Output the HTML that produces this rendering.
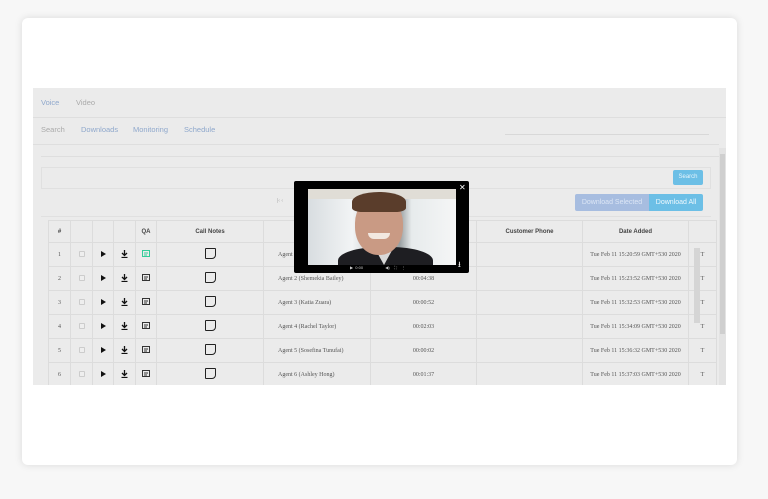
<!DOCTYPE html>
<html><head><style>
*{margin:0;padding:0;box-sizing:border-box}
body{width:768px;height:499px;background:#f7f7f7;font-family:"Liberation Sans",sans-serif;position:relative;overflow:hidden}
.a{position:absolute}
.card{left:22px;top:18px;width:715px;height:447px;background:#fff;border-radius:6px;box-shadow:0 0 8px rgba(0,0,0,.12)}
.grey{left:33px;top:88px;width:693px;height:297px;background:#ebebeb;overflow:hidden}
.t{font-size:7.5px;color:#8fa8cc}
.line{background:#dedede;height:1px}
table{border-collapse:collapse;font-size:6px;color:#555}
td,th{border:1px solid #dcdcdc;text-align:center;height:24px;padding:0}
th{font-weight:bold;color:#444;height:22px}
td.l{text-align:left;padding-left:14px;font-family:"Liberation Serif",serif}
td.s{font-family:"Liberation Serif",serif}
.cb{display:inline-block;width:6px;height:6px;border:1px solid #ccc;border-radius:1px;background:#eee}
.note{display:inline-block;width:11px;height:11px;border:1.5px solid #222;border-radius:1px 1px 4px 1px}
.pl{display:inline-block;width:0;height:0;border-left:5px solid #111;border-top:3.5px solid transparent;border-bottom:3.5px solid transparent}
</style></head><body>
<div class="a card"></div>
<div class="a grey">
  <div class="a t" style="left:8px;top:10px">Voice</div>
  <div class="a t" style="left:43px;top:10px;color:#aaa">Video</div>
  <div class="a line" style="left:0;top:29px;width:693px"></div>
  <div class="a t" style="left:8px;top:37px;color:#aaa">Search</div>
  <div class="a t" style="left:48px;top:37px">Downloads</div>
  <div class="a t" style="left:100px;top:37px">Monitoring</div>
  <div class="a t" style="left:151px;top:37px">Schedule</div>
  <div class="a line" style="left:472px;top:46px;width:204px;background:#d8d8d8"></div>
  <div class="a line" style="left:0;top:56px;width:686px"></div>
  <div class="a line" style="left:8px;top:68px;width:678px"></div>
  <div class="a" style="left:8px;top:79px;width:670px;height:22px;border:1px solid #e0e0e0"></div>
  <div class="a" style="left:640px;top:82px;width:30px;height:15px;background:#6cbfe6;border-radius:2px;color:#e6f4fb;font-size:6px;text-align:center;line-height:15px">Search</div>
  <div class="a" style="left:8px;top:101px;width:670px;height:28px;border-bottom:1px solid #e0e0e0"></div>
  <div class="a" style="left:244px;top:110px;font-size:5px;color:#aaa">|‹ ‹</div>
  <div class="a" style="left:542px;top:106px;width:74px;height:17px;background:#a7bde0;border-radius:2px 0 0 2px;color:#dce6f5;font-size:7px;text-align:center;line-height:17px">Download Selected</div>
  <div class="a" style="left:616px;top:106px;width:54px;height:17px;background:#6cbfe6;border-radius:0 2px 2px 0;color:#eef8fd;font-size:7px;text-align:center;line-height:17px">Download All</div>
  <table class="a" style="left:15px;top:132px;width:669px">
    <tr><th style="width:22px">#</th><th style="width:22px"></th><th style="width:21px"></th><th style="width:22px"></th><th style="width:21px">QA</th><th style="width:107px">Call Notes</th><th style="width:107px"></th><th style="width:106px"></th><th style="width:106px">Customer Phone</th><th style="width:106px">Date Added</th><th></th></tr>
    <tr><td class="s">1</td><td><span class="cb"></span></td><td><span class="pl"></span></td><td><svg width="7" height="8"><path d="M3.5 0v5M1 3l2.5 2.5L6 3M0.5 7.5h6" stroke="#111" stroke-width="1.3" fill="none"/></svg></td><td><svg width="8" height="8"><rect x=".5" y=".5" width="7" height="6" fill="none" stroke="#3c9"/><path d="M2 3h4M2 5h3" stroke="#3c9"/></svg></td><td><span class="note"></span></td><td class="l">Agent 1</td><td class="s"></td><td></td><td class="s">Tue Feb 11 15:20:59 GMT+530 2020</td><td class="s">T</td></tr>
    <tr><td class="s">2</td><td><span class="cb"></span></td><td><span class="pl"></span></td><td><svg width="7" height="8"><path d="M3.5 0v5M1 3l2.5 2.5L6 3M0.5 7.5h6" stroke="#111" stroke-width="1.3" fill="none"/></svg></td><td><svg width="8" height="8"><rect x=".5" y=".5" width="7" height="6" fill="none" stroke="#333"/><path d="M2 3h4M2 5h3" stroke="#333"/></svg></td><td><span class="note"></span></td><td class="l">Agent 2 (Shemekia Bailey)</td><td class="s">00:04:38</td><td></td><td class="s">Tue Feb 11 15:23:52 GMT+530 2020</td><td class="s">T</td></tr>
    <tr><td class="s">3</td><td><span class="cb"></span></td><td><span class="pl"></span></td><td><svg width="7" height="8"><path d="M3.5 0v5M1 3l2.5 2.5L6 3M0.5 7.5h6" stroke="#111" stroke-width="1.3" fill="none"/></svg></td><td><svg width="8" height="8"><rect x=".5" y=".5" width="7" height="6" fill="none" stroke="#333"/><path d="M2 3h4M2 5h3" stroke="#333"/></svg></td><td><span class="note"></span></td><td class="l">Agent 3 (Katia Zuara)</td><td class="s">00:00:52</td><td></td><td class="s">Tue Feb 11 15:32:53 GMT+530 2020</td><td class="s">T</td></tr>
    <tr><td class="s">4</td><td><span class="cb"></span></td><td><span class="pl"></span></td><td><svg width="7" height="8"><path d="M3.5 0v5M1 3l2.5 2.5L6 3M0.5 7.5h6" stroke="#111" stroke-width="1.3" fill="none"/></svg></td><td><svg width="8" height="8"><rect x=".5" y=".5" width="7" height="6" fill="none" stroke="#333"/><path d="M2 3h4M2 5h3" stroke="#333"/></svg></td><td><span class="note"></span></td><td class="l">Agent 4 (Rachel Taylor)</td><td class="s">00:02:03</td><td></td><td class="s">Tue Feb 11 15:34:09 GMT+530 2020</td><td class="s">T</td></tr>
    <tr><td class="s">5</td><td><span class="cb"></span></td><td><span class="pl"></span></td><td><svg width="7" height="8"><path d="M3.5 0v5M1 3l2.5 2.5L6 3M0.5 7.5h6" stroke="#111" stroke-width="1.3" fill="none"/></svg></td><td><svg width="8" height="8"><rect x=".5" y=".5" width="7" height="6" fill="none" stroke="#333"/><path d="M2 3h4M2 5h3" stroke="#333"/></svg></td><td><span class="note"></span></td><td class="l">Agent 5 (Sosefina Tunufai)</td><td class="s">00:00:02</td><td></td><td class="s">Tue Feb 11 15:36:32 GMT+530 2020</td><td class="s">T</td></tr>
    <tr><td class="s">6</td><td><span class="cb"></span></td><td><span class="pl"></span></td><td><svg width="7" height="8"><path d="M3.5 0v5M1 3l2.5 2.5L6 3M0.5 7.5h6" stroke="#111" stroke-width="1.3" fill="none"/></svg></td><td><svg width="8" height="8"><rect x=".5" y=".5" width="7" height="6" fill="none" stroke="#333"/><path d="M2 3h4M2 5h3" stroke="#333"/></svg></td><td><span class="note"></span></td><td class="l">Agent 6 (Ashley Hong)</td><td class="s">00:01:37</td><td></td><td class="s">Tue Feb 11 15:37:03 GMT+530 2020</td><td class="s">T</td></tr>
  </table>
  <div class="a" style="left:686px;top:60px;width:7px;height:237px;background:#e3e3e3"></div>
  <div class="a" style="left:687px;top:66px;width:5px;height:180px;background:#cfcfcf"></div>
  <div class="a" style="left:661px;top:160px;width:6px;height:75px;background:#d5d5d5"></div>
</div>
<div class="a" style="left:294px;top:181px;width:175px;height:92px;background:#000;border-radius:2px">
  <div class="a" style="left:14px;top:8px;width:148px;height:76px;overflow:hidden;background:linear-gradient(90deg,#d8dde0 0,#f2f4f5 30%,#9aa0a2 62%,#e7ebec 70%,#f5f6f6 100%)">
    <div class="a" style="left:0;top:0;width:148px;height:10px;background:#e0ddd6"></div>
    <div class="a" style="left:30px;top:58px;width:95px;height:30px;background:#1e1e22;border-radius:45% 45% 0 0"></div>
    <div class="a" style="left:65px;top:56px;width:22px;height:20px;background:#d9d9d9;clip-path:polygon(0 0,100% 0,50% 100%)"></div>
    <div class="a" style="left:47px;top:8px;width:48px;height:58px;background:#c99a84;border-radius:45% 45% 48% 48%"></div>
    <div class="a" style="left:44px;top:3px;width:54px;height:20px;background:#5a3d2b;border-radius:50% 50% 20% 20%"></div>
    <div class="a" style="left:60px;top:44px;width:22px;height:6px;background:#f2e8e0;border-radius:0 0 10px 10px"></div>
  </div>
  <div class="a" style="left:165px;top:2px;color:#fff;font-size:8px">✕</div>
  <div class="a" style="left:164px;top:78px;color:#fff;font-size:8px">⭳</div>
  <div class="a" style="left:56px;top:84px;color:#ccc;font-size:4px;white-space:pre">▶  0:00                    ◀)    ⛶    ⋮</div>
</div>
</body></html>
